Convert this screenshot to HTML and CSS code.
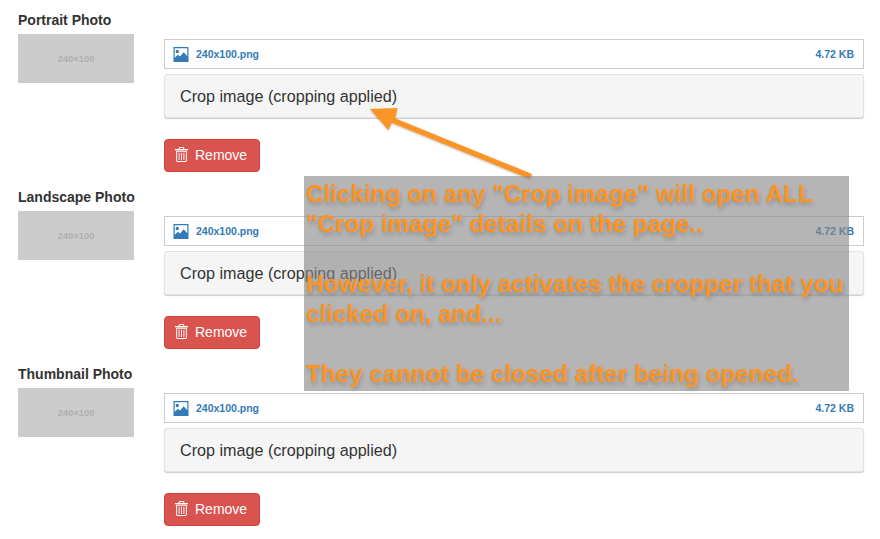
FILE: index.html
```html
<!DOCTYPE html>
<html lang="en">
<head>
  <meta charset="UTF-8">
  <title>Photo fields</title>
  <link rel="stylesheet" href="styles.css">
</head>
<body>

  <svg width="0" height="0" class="icon-defs">
    <symbol id="icon-image" viewBox="0 0 16 16">
      <path fill="currentColor" fill-rule="evenodd" d="M0 0h16v16H0zM1.300 1.300v10.200l3.400-3.200 2.200 1.900 4-4.600 3.800 4.300V1.300zM4 3a1.800 1.800 0 1 1 0 3.600A1.800 1.800 0 0 1 4 3z"/>
    </symbol>
    <symbol id="icon-trash" viewBox="0 0 14 16">
      <path fill="currentColor" fill-rule="evenodd" d="M4.500 0h5l.8 2H14v1.300H0V2h3.700zM5.200 1l-.4 1h4.400l-.4-1zM1.200 4h11.600v10.500c0 .9-.6 1.500-1.400 1.500H2.600c-.8 0-1.400-.6-1.400-1.500zM2.300 5v9.500c0 .3.100.4.300.4h8.800c.2 0 .3-.1.300-.4V5zM3.900 6h1v7.800h-1zM6.500 6h1v7.800h-1zM9.100 6h1v7.800h-1z"/>
    </symbol>
  </svg>

  <div class="field">
    <div class="field-label">Portrait Photo</div>
    <div class="field-row">
      <div class="thumb">240×100</div>
      <div class="field-main">
        <div class="file-box">
          <svg class="file-icon"><use href="#icon-image"/></svg>
          <a class="file-name">240x100.png</a>
          <span class="file-size">4.72 KB</span>
        </div>
        <div class="crop-panel">Crop image (cropping applied)</div>
        <button class="btn-remove"><svg class="trash-icon"><use href="#icon-trash"/></svg>Remove</button>
      </div>
    </div>
  </div>

  <div class="field">
    <div class="field-label">Landscape Photo</div>
    <div class="field-row">
      <div class="thumb">240×100</div>
      <div class="field-main">
        <div class="file-box">
          <svg class="file-icon"><use href="#icon-image"/></svg>
          <a class="file-name">240x100.png</a>
          <span class="file-size">4.72 KB</span>
        </div>
        <div class="crop-panel">Crop image (cropping applied)</div>
        <button class="btn-remove"><svg class="trash-icon"><use href="#icon-trash"/></svg>Remove</button>
      </div>
    </div>
  </div>

  <div class="field">
    <div class="field-label">Thumbnail Photo</div>
    <div class="field-row">
      <div class="thumb">240×100</div>
      <div class="field-main">
        <div class="file-box">
          <svg class="file-icon"><use href="#icon-image"/></svg>
          <a class="file-name">240x100.png</a>
          <span class="file-size">4.72 KB</span>
        </div>
        <div class="crop-panel">Crop image (cropping applied)</div>
        <button class="btn-remove"><svg class="trash-icon"><use href="#icon-trash"/></svg>Remove</button>
      </div>
    </div>
  </div>

  <!-- annotation on top of the page -->
  <svg class="arrow" width="180" height="85" viewBox="0 0 180 85">
    <path fill="#fb9426" d="M10 9 L37.500 8 L35 18.300 L172 74 L170 79 L31.700 22.700 L28.300 30 z"/>
  </svg>
  <div class="note">
    <p>Clicking on any "Crop image" will open ALL "Crop image" details on the page..</p>
    <p>However, it only activates the cropper that you clicked on, and...</p>
    <p>They cannot be closed after being opened.</p>
  </div>

</body>
</html>
```

FILE: styles.css
```css
* {
  box-sizing: border-box;
}

body {
  margin: 0;
  padding: 10px 16px 0 18px;
  font-family: "Liberation Sans", Arial, sans-serif;
  color: #333;
  background: #fff;
  overflow: hidden;
}

.icon-defs {
  position: absolute;
}

.field {
  height: 177px;
}

.field-label {
  font-size: 14px;
  font-weight: bold;
  line-height: 20px;
  margin-bottom: 4px;
}

.field-row {
  display: flex;
  gap: 30px;
  align-items: flex-start;
}

.thumb {
  width: 116px;
  height: 49px;
  flex: none;
  display: flex;
  align-items: center;
  justify-content: center;
  background: #ccc;
  color: #aeaeae;
  font-size: 9.500px;
  font-weight: bold;
}

.field-main {
  flex: 1;
  padding-top: 5px;
}

.file-box {
  display: flex;
  align-items: center;
  height: 30px;
  padding: 0 9px 0 8px;
  border: 1px solid #ccc;
  font-size: 10.500px;
  font-weight: bold;
  color: #337ab7;
}

.file-icon {
  width: 16px;
  height: 15px;
  margin-right: 7px;
}

.file-name {
  flex: 1;
}

.crop-panel {
  height: 44px;
  margin-top: 5px;
  padding: 0 15px;
  line-height: 43px;
  font-size: 16.150px;
  color: #333;
  background: #f5f5f5;
  border: 1px solid #e3e3e3;
  border-radius: 3px;
  box-shadow: 0 1px 1px rgba(0, 0, 0, .2);
}

.btn-remove {
  display: flex;
  align-items: center;
  width: 96px;
  height: 33px;
  margin-top: 21px;
  padding: 0 0 2px 10px;
  font-family: inherit;
  font-size: 14px;
  color: #fff;
  background: #d9534f;
  border: 1px solid #d43f3a;
  border-radius: 4px;
}

.trash-icon {
  width: 13px;
  height: 15px;
  margin-right: 7px;
}

.arrow {
  position: absolute;
  left: 360px;
  top: 100px;
  filter: drop-shadow(0 1px 1px rgba(0, 0, 0, .25));
}

.note {
  position: absolute;
  left: 304px;
  top: 176px;
  width: 545px;
  height: 215px;
  padding: 3px 2px;
  background: rgba(135, 135, 135, .62);
  color: #fb9426;
  font-size: 24.300px;
  font-weight: bold;
  line-height: 30px;
  text-shadow: 1px 3px 4px rgba(0, 0, 0, .2);
}

.note p {
  margin: 0 0 30px;
}
```
